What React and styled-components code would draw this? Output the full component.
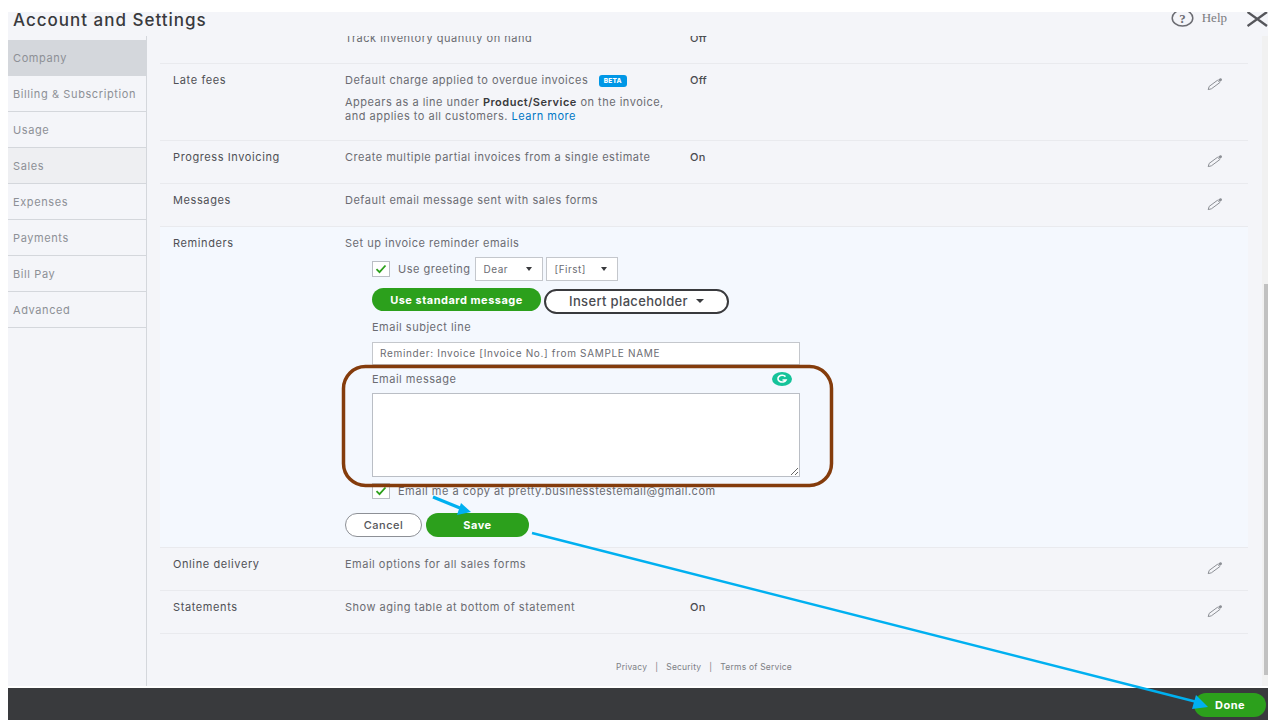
import React from 'react'
import styled, { createGlobalStyle } from 'styled-components'

const GlobalStyle = createGlobalStyle`
    html, body {
        margin: 0;
        background: #fff;
    }
    body {
        font-family: Inter, "Noto Sans", sans-serif;
    }
`

const Page = styled.div`
    position: relative;
    width: 1280px;
    height: 720px;
    padding: 12px 12px 0 8px;
    box-sizing: border-box;
    overflow: hidden;
`

const Shell = styled.div`
    display: flex;
    flex-direction: column;
    height: 708px;
    background: #f4f5f9;
`

const Header = styled.header`
    display: flex;
    align-items: flex-start;
    height: 24px;
    padding-left: 5px;
    flex: none;
`

const Title = styled.h1`
    flex: 1;
    margin: 0;
    font-size: 17px;
    line-height: 16px;
    font-weight: 500;
    letter-spacing: 1px;
    color: #393a3d;
`

const HelpIcon = styled.svg`
    width: 23px;
    height: 15px;
`

const HelpLabel = styled.span`
    margin: 0 20px 0 8px;
    font-family: "Liberation Serif", serif;
    font-size: 13px;
    line-height: 12px;
    color: #7a7b80;
`

const CloseIcon = styled.svg`
    width: 21px;
    height: 15px;
`

const Body = styled.div`
    display: flex;
    height: 650px;
    flex: none;
`

const Sidebar = styled.nav`
    width: 139px;
    padding-top: 4px;
    box-sizing: border-box;
    border-right: 1px solid #d4d7dc;
    flex: none;
`

const NAV_BACKGROUNDS = { selected: '#d4d7dc', current: '#eeeff2' }

const NavItem = styled.div`
    display: flex;
    align-items: center;
    height: 36px;
    padding-left: 5px;
    box-sizing: border-box;
    border-bottom: ${({ $tone }) => ($tone === 'selected' ? 'none' : '1px solid #d4d7dc')};
    background: ${({ $tone }) => NAV_BACKGROUNDS[$tone] || 'transparent'};
    font-size: 11px;
    letter-spacing: 0.6px;
    color: #8d9096;
`

const Main = styled.main`
    flex: 1;
    min-width: 0;
    padding: 0 14px 0 13px;
    overflow: hidden;
`

const Row = styled.section`
    display: flex;
    align-items: flex-start;
    box-sizing: border-box;
    min-height: ${({ $height }) => $height || 43}px;
    padding: 9px 25px 0 13px;
    border-bottom: 1px solid #e9eaee;
    background: ${({ $open }) => ($open ? '#f4f8fe' : 'transparent')};
    font-size: 11px;
    line-height: 14px;
    letter-spacing: 0.5px;
    color: #6b6c72;
`

const ClippedRow = styled(Row)`
    min-height: 28px;
    height: 28px;
    padding-top: 0;
    & > * {
        margin-top: -5px;
    }
`

const Label = styled.div`
    width: 172px;
    flex: none;
    letter-spacing: 0.6px;
    color: #4f5055;
`

const Description = styled.div`
    width: 345px;
    flex: none;
`

const Note = styled.p`
    margin: 8px 0 0;
`

const Strong = styled.b`
    font-weight: 600;
    color: #393a3d;
`

const LearnMore = styled.span`
    color: #0077c5;
`

const Beta = styled.span`
    display: inline-block;
    margin-left: 7px;
    padding: 0 5px;
    border-radius: 3px;
    background: #0097e6;
    font-size: 6.5px;
    line-height: 12px;
    font-weight: 800;
    letter-spacing: 0.2px;
    color: #fff;
    vertical-align: 1px;
`

const Value = styled.div`
    flex: 1;
    font-weight: 500;
    letter-spacing: 0.2px;
    color: #4a4b50;
`

const Pencil = styled.svg`
    width: 16px;
    height: 14px;
    margin-top: 4px;
    flex: none;
`

const Form = styled.div`
    display: flex;
    flex-direction: column;
    align-items: flex-start;
    padding-bottom: 10px;
`

const Indented = styled.div`
    display: flex;
    flex-direction: column;
    align-items: flex-start;
    margin-left: 27px;
`

const Inline = styled.div`
    display: flex;
    align-items: ${({ $align }) => $align || 'center'};
    gap: ${({ $gap }) => $gap || 0}px;
    margin-top: ${({ $top }) => $top || 0}px;
`

const Pickers = styled.div`
    display: flex;
    gap: 3px;
    margin-left: 4px;
`

const CheckBox = styled.span`
    display: flex;
    align-items: center;
    justify-content: center;
    width: 16px;
    height: 14px;
    margin-right: 8px;
    border: 1px solid #babec5;
    background: #fff;
`

const Picker = styled.div`
    display: flex;
    align-items: center;
    justify-content: space-between;
    width: ${({ $width }) => $width}px;
    height: 24px;
    padding: 0 10px 0 8px;
    box-sizing: border-box;
    border: 1px solid #c4c7cc;
    background: #fff;
    font-size: 10px;
    color: #6b6c72;
`

const Caret = styled.span`
    width: 0;
    height: 0;
    border-left: ${({ $size }) => $size || 3.5}px solid transparent;
    border-right: ${({ $size }) => $size || 3.5}px solid transparent;
    border-top: ${({ $size }) => $size || 4}px solid #393a3d;
`

const GreenButton = styled.button`
    width: ${({ $width }) => $width}px;
    height: ${({ $height }) => $height || 24}px;
    padding: 0;
    border: none;
    border-radius: 12px;
    background: #2ca01c;
    font-family: inherit;
    font-size: 11px;
    font-weight: 700;
    letter-spacing: 0.5px;
    color: #fff;
`

const PlaceholderButton = styled.button`
    display: flex;
    align-items: center;
    justify-content: center;
    gap: 8px;
    width: 185px;
    height: 25px;
    margin-top: 1px;
    padding: 0 0 1px;
    border: 2px solid #393a3d;
    border-radius: 13px;
    background: #fff;
    font-family: inherit;
    font-size: 13px;
    font-weight: 500;
    letter-spacing: 0.35px;
    color: #4a4b50;
`

const CancelButton = styled.button`
    width: 77px;
    height: 24px;
    padding: 0;
    border: 1px solid #8d9096;
    border-radius: 12px;
    background: #fff;
    font-family: inherit;
    font-size: 11px;
    font-weight: 500;
    letter-spacing: 0.5px;
    color: #55565b;
`

const FieldLabel = styled.div`
    display: flex;
    justify-content: space-between;
    align-items: center;
    width: ${({ $wide }) => ($wide ? '420px' : 'auto')};
    padding-right: ${({ $wide }) => ($wide ? '8px' : '0')};
    height: 14px;
    margin-top: ${({ $wide }) => ($wide ? 7 : 6)}px;
`

const TextField = styled.input`
    width: 428px;
    height: 23px;
    margin-top: 8px;
    padding: 0 7px 1px;
    box-sizing: border-box;
    border: 1px solid #c4c7cc;
    border-radius: 0;
    background: #fff;
    font-family: inherit;
    font-size: 10px;
    letter-spacing: 0.67px;
    color: #6b6c72;
    outline: none;
`

const MessageField = styled.textarea`
    display: block;
    width: 428px;
    height: 84px;
    margin-top: 7px;
    padding: 0;
    box-sizing: border-box;
    border: 1px solid #babec5;
    border-radius: 0;
    background: #fff;
    outline: none;
    resize: both;
`

const Grammarly = styled.svg`
    width: 20px;
    height: 14px;
`

const Legal = styled.div`
    display: flex;
    justify-content: center;
    gap: 8px;
    margin-top: 27px;
    font-size: 8.5px;
    line-height: 12px;
    letter-spacing: 0.2px;
    color: #7d7f85;
`

const ScrollTrack = styled.div`
    display: flex;
    justify-content: flex-end;
    width: 6px;
    padding-top: 248px;
    box-sizing: border-box;
    background: #f1f1f1;
    flex: none;
`

const ScrollThumb = styled.div`
    width: 4px;
    height: 391px;
    background: #c1c1c1;
`

const Footer = styled.footer`
    display: flex;
    justify-content: flex-end;
    height: 34px;
    padding: 5px 2px 0 0;
    box-sizing: border-box;
    border-top: 2px solid #fff;
    background: #393a3d;
    flex: none;
`

const Annotations = styled.svg`
    position: absolute;
    top: 0;
    left: 0;
    width: 1280px;
    height: 720px;
    pointer-events: none;
`

const NAV_ITEMS = [
    { name: 'Company', tone: 'selected' },
    { name: 'Billing & Subscription' },
    { name: 'Usage' },
    { name: 'Sales', tone: 'current' },
    { name: 'Expenses' },
    { name: 'Payments' },
    { name: 'Bill Pay' },
    { name: 'Advanced' },
]

function PencilIcon() {
    return (
        <Pencil viewBox="0 0 16 14">
            <path d="M1.2 12.6l1-3.2L10.6 3.2l2.2 2.4-8.4 6.2z" fill="none" stroke="#8d9096" strokeWidth="1" />
            <path d="M11.2 2.7l1.6-1.2c.8-.5 1.6-.2 2 .4.3.6.2 1.3-.4 1.8l-1.4 1.1z" fill="#8d9096" />
        </Pencil>
    )
}

function CheckMark() {
    return (
        <svg width="12" height="10" viewBox="0 0 12 10">
            <path d="M1.5 5.2l3 3L10.5 1.5" fill="none" stroke="#2ca01c" strokeWidth="1.8" />
        </svg>
    )
}

function SettingRow({ label, value, height, children }) {
    return (
        <Row $height={height}>
            <Label>{label}</Label>
            <Description>{children}</Description>
            <Value>{value}</Value>
            <PencilIcon />
        </Row>
    )
}

function ReminderForm() {
    return (
        <Form>
            <div>Set up invoice reminder emails</div>
            <Indented>
                <Inline $top={7}>
                    <CheckBox><CheckMark /></CheckBox>
                    <span>Use greeting</span>
                    <Pickers>
                        <Picker $width={68}>Dear <Caret /></Picker>
                        <Picker $width={72}>[First] <Caret /></Picker>
                    </Pickers>
                </Inline>
                <Inline $top={7} $gap={3} $align="flex-start">
                    <GreenButton $width={169} $height={23}>Use standard message</GreenButton>
                    <PlaceholderButton>Insert placeholder <Caret $size={4.5} /></PlaceholderButton>
                </Inline>
                <FieldLabel>Email subject line</FieldLabel>
                <TextField readOnly value="Reminder: Invoice [Invoice No.] from SAMPLE NAME" />
                <FieldLabel $wide>
                    <span>Email message</span>
                    <Grammarly viewBox="0 0 20 14">
                        <ellipse cx="10" cy="7" rx="10" ry="7" fill="#15c39a" />
                        <path d="M13.5 4.6A4.2 3.4 0 1 0 14 8H10.5" fill="none" stroke="#fff" strokeWidth="1.6" />
                    </Grammarly>
                </FieldLabel>
                <MessageField readOnly />
                <Inline $top={6}>
                    <CheckBox><CheckMark /></CheckBox>
                    <span>Email me a copy at pretty.businesstestemail@gmail.com</span>
                </Inline>
            </Indented>
            <Inline $top={14} $gap={4}>
                <CancelButton>Cancel</CancelButton>
                <GreenButton $width={103}>Save</GreenButton>
            </Inline>
        </Form>
    )
}

export default function App() {
    return (
        <Page>
            <GlobalStyle />
            <Shell>
                <Header>
                    <Title>Account and Settings</Title>
                    <HelpIcon viewBox="0 0 23 15">
                        <ellipse cx="11.5" cy="6" rx="10.3" ry="8" fill="none" stroke="#6b6c72" strokeWidth="1.5" />
                        <text x="11.5" y="10.5" textAnchor="middle" fontFamily="Liberation Serif, serif" fontSize="13" fontWeight="700" fill="#6b6c72">?</text>
                    </HelpIcon>
                    <HelpLabel>Help</HelpLabel>
                    <CloseIcon viewBox="0 0 21 15">
                        <path d="M0.5 0L20 14M20 0L0.5 14" fill="none" stroke="#55565b" strokeWidth="2.4" />
                    </CloseIcon>
                </Header>
                <Body>
                    <Sidebar>
                        {NAV_ITEMS.map((item) => (
                            <NavItem key={item.name} $tone={item.tone}>{item.name}</NavItem>
                        ))}
                    </Sidebar>
                    <Main>
                        <ClippedRow>
                            <Label />
                            <Description>Track inventory quantity on hand</Description>
                            <Value>Off</Value>
                        </ClippedRow>
                        <SettingRow label="Late fees" value="Off" height={77}>
                            Default charge applied to overdue invoices <Beta>BETA</Beta>
                            <Note>
                                Appears as a line under <Strong>Product/Service</Strong> on the invoice,
                                <br />
                                and applies to all customers. <LearnMore>Learn more</LearnMore>
                            </Note>
                        </SettingRow>
                        <SettingRow label="Progress Invoicing" value="On">
                            Create multiple partial invoices from a single estimate
                        </SettingRow>
                        <SettingRow label="Messages">
                            Default email message sent with sales forms
                        </SettingRow>
                        <Row $open>
                            <Label>Reminders</Label>
                            <ReminderForm />
                        </Row>
                        <SettingRow label="Online delivery">
                            Email options for all sales forms
                        </SettingRow>
                        <SettingRow label="Statements" value="On">
                            Show aging table at bottom of statement
                        </SettingRow>
                        <Legal>
                            <span>Privacy</span>
                            <span>|</span>
                            <span>Security</span>
                            <span>|</span>
                            <span>Terms of Service</span>
                        </Legal>
                    </Main>
                    <ScrollTrack><ScrollThumb /></ScrollTrack>
                </Body>
                <Footer>
                    <GreenButton $width={72}>Done</GreenButton>
                </Footer>
            </Shell>
            <Annotations viewBox="0 0 1280 720">
                <rect x="343.5" y="366.5" width="488" height="119" rx="22" fill="none" stroke="#843c0c" strokeWidth="3.5" />
                <path d="M433 497L460 508" stroke="#00b0f0" strokeWidth="3" />
                <polygon points="471,512 457,515 461,503" fill="#00b0f0" />
                <path d="M532 533L1197 702" stroke="#00b0f0" strokeWidth="2.5" />
                <polygon points="1208,707 1192,709 1196,695" fill="#00b0f0" />
            </Annotations>
        </Page>
    )
}
